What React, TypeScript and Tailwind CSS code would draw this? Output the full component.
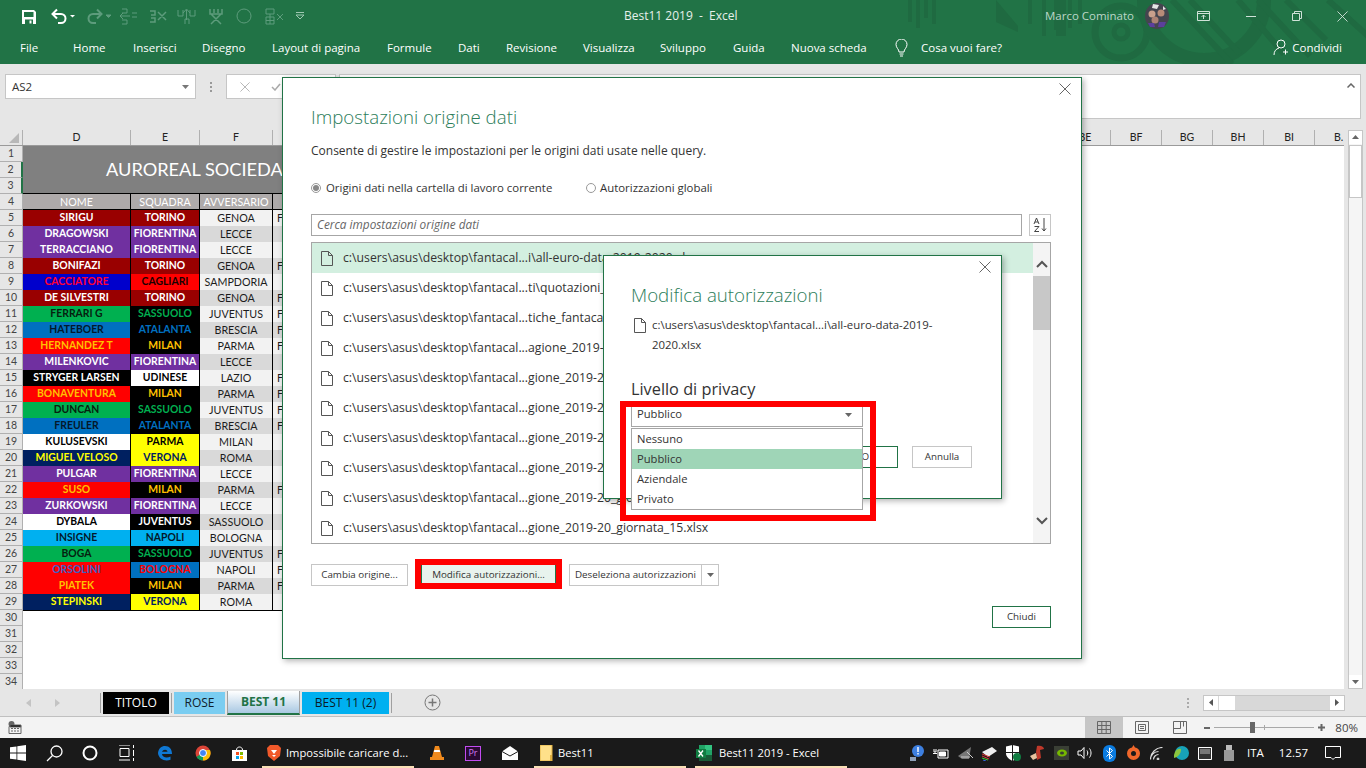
import type { ReactNode } from 'react'

const UI = "font-['Open_Sans','Noto_Sans',sans-serif]"

// nome, fondo, testo, squadra, fondo, testo, avversario, colonna G
const ROWS: [string, string, string, string, string, string, string, boolean][] = [
  ['SIRIGU', 'bg-[#990000]', 'text-white', 'TORINO', 'bg-[#990000]', 'text-white', 'GENOA', true],
  ['DRAGOWSKI', 'bg-[#7030a0]', 'text-white', 'FIORENTINA', 'bg-[#7030a0]', 'text-white', 'LECCE', false],
  ['TERRACCIANO', 'bg-[#7030a0]', 'text-white', 'FIORENTINA', 'bg-[#7030a0]', 'text-white', 'LECCE', false],
  ['BONIFAZI', 'bg-[#990000]', 'text-white', 'TORINO', 'bg-[#990000]', 'text-white', 'GENOA', true],
  ['CACCIATORE', 'bg-[#0000cc]', 'text-[#ff0033]', 'CAGLIARI', 'bg-[#ff0000]', 'text-[#1a0000]', 'SAMPDORIA', false],
  ['DE SILVESTRI', 'bg-[#990000]', 'text-white', 'TORINO', 'bg-[#990000]', 'text-white', 'GENOA', true],
  ['FERRARI G', 'bg-[#00b050]', 'text-[#06210f]', 'SASSUOLO', 'bg-black', 'text-[#00b050]', 'JUVENTUS', true],
  ['HATEBOER', 'bg-[#0070c0]', 'text-[#04182a]', 'ATALANTA', 'bg-black', 'text-[#0070c0]', 'BRESCIA', true],
  ['HERNANDEZ T', 'bg-[#ff0000]', 'text-[#ffc000]', 'MILAN', 'bg-black', 'text-[#ffc000]', 'PARMA', true],
  ['MILENKOVIC', 'bg-[#7030a0]', 'text-white', 'FIORENTINA', 'bg-[#7030a0]', 'text-white', 'LECCE', false],
  ['STRYGER LARSEN', 'bg-black', 'text-white', 'UDINESE', 'bg-white', 'text-black', 'LAZIO', true],
  ['BONAVENTURA', 'bg-[#ff0000]', 'text-[#ffc000]', 'MILAN', 'bg-black', 'text-[#ffc000]', 'PARMA', true],
  ['DUNCAN', 'bg-[#00b050]', 'text-[#06210f]', 'SASSUOLO', 'bg-black', 'text-[#00b050]', 'JUVENTUS', true],
  ['FREULER', 'bg-[#0070c0]', 'text-[#04182a]', 'ATALANTA', 'bg-black', 'text-[#0070c0]', 'BRESCIA', true],
  ['KULUSEVSKI', 'bg-white', 'text-black', 'PARMA', 'bg-[#ffff00]', 'text-black', 'MILAN', false],
  ['MIGUEL VELOSO', 'bg-[#002060]', 'text-[#ffff00]', 'VERONA', 'bg-[#ffff00]', 'text-[#002060]', 'ROMA', false],
  ['PULGAR', 'bg-[#7030a0]', 'text-white', 'FIORENTINA', 'bg-[#7030a0]', 'text-white', 'LECCE', false],
  ['SUSO', 'bg-[#ff0000]', 'text-[#ffc000]', 'MILAN', 'bg-black', 'text-[#ffc000]', 'PARMA', true],
  ['ZURKOWSKI', 'bg-[#7030a0]', 'text-white', 'FIORENTINA', 'bg-[#7030a0]', 'text-white', 'LECCE', false],
  ['DYBALA', 'bg-white', 'text-black', 'JUVENTUS', 'bg-black', 'text-white', 'SASSUOLO', false],
  ['INSIGNE', 'bg-[#00b0f0]', 'text-[#04182a]', 'NAPOLI', 'bg-[#00b0f0]', 'text-[#04182a]', 'BOLOGNA', false],
  ['BOGA', 'bg-[#00b050]', 'text-[#06210f]', 'SASSUOLO', 'bg-black', 'text-[#00b050]', 'JUVENTUS', true],
  ['ORSOLINI', 'bg-[#ff0000]', 'text-[#3f5fc0]', 'BOLOGNA', 'bg-[#0070c0]', 'text-[#ff0000]', 'NAPOLI', true],
  ['PIATEK', 'bg-[#ff0000]', 'text-[#ffc000]', 'MILAN', 'bg-black', 'text-[#ffc000]', 'PARMA', true],
  ['STEPINSKI', 'bg-[#002060]', 'text-[#ffff00]', 'VERONA', 'bg-[#ffff00]', 'text-[#002060]', 'ROMA', false],
]

const TABS: [string, string][] = [
  ['File', 'w-[73px] pl-[20px]'],
  ['Home', 'w-[60px]'],
  ['Inserisci', 'w-[69px]'],
  ['Disegno', 'w-[70px]'],
  ['Layout di pagina', 'w-[115px]'],
  ['Formule', 'w-[71px]'],
  ['Dati', 'w-[48px]'],
  ['Revisione', 'w-[77px]'],
  ['Visualizza', 'w-[77px]'],
  ['Sviluppo', 'w-[73px]'],
  ['Guida', 'w-[58px]'],
  ['Nuova scheda', 'w-[70px]'],
]

const FILES = [
  'i\\all-euro-data-2019-2020.xlsx',
  'ti\\quotazioni_',
  'tiche_fantacal',
  'agione_2019-',
  'gione_2019-2',
  'gione_2019-2',
  'gione_2019-2',
  'gione_2019-2',
  'gione_2019-20_gio',
  'gione_2019-20_giornata_15.xlsx',
]

function FileIcon() {
  return (
    <svg width="12" height="15" viewBox="0 0 12 15" fill="none" stroke="#555" className="shrink-0">
      <path d="M.5.5h7l4 4v10H.5zM7.5.5v4h4" />
    </svg>
  )
}

function Close({ size = 12, color = '#666' }: { size?: number; color?: string }) {
  return (
    <svg width={size} height={size} viewBox="0 0 12 12" stroke={color} fill="none">
      <path d="M.5.5l11 11M11.5.5l-11 11" />
    </svg>
  )
}

function Caret({ color = '#666' }: { color?: string }) {
  return (
    <svg width="7" height="4" viewBox="0 0 7 4" fill={color}>
      <path d="M0 0h7L3.5 4z" />
    </svg>
  )
}

function QatIcons() {
  return (
    <svg width="300" height="32" viewBox="0 0 300 32" fill="none" className="shrink-0">
      {/* salva */}
      <path d="M22 10h12l2 2v12H22z" fill="#fff" />
      <path d="M24 12h9.500v5H24zM25 19.500h8V24h-8z" fill="#217346" />
      <path d="M29.500 20.500h2v3h-2z" fill="#fff" />
      {/* annulla */}
      <path d="M53 14h8a4.500 4.500 0 0 1 0 9h-3M57 9.500L52.500 14l4.500 4.500" stroke="#fff" strokeWidth="2" />
      <path d="M70 15h5l-2.500 2.500z" fill="#fff" />
      {/* ripeti e comandi disattivati */}
      <g stroke="#5d9c7c">
        <path d="M101 14h-8a4.500 4.500 0 0 0 0 9h3M97 9.500l4.500 4.500-4.500 4.500" strokeWidth="2" />
        <path d="M106 15h5l-2.500 2.500z" fill="#5d9c7c" />
        <path d="M122 9h5v4h-5M122 20h5v4h-5M120 16h10M123 13l-3 3 3 3M132 13h5M132 17h5" />
        <path d="M150 11h5v4h-4M150 22h5v-4h-4M158 12l8 8M166 12l-8 8" strokeWidth="1.500" />
        <path d="M178 10v6h5v-6M190 10v6h5v-6M186.500 20v-10M183 13l3.500-4 3.500 4M185 24v-5h4v5" />
        <path d="M210 9v5h12V9M214 9v4M218 9v4M211 24l10-10M211 14l10 10" strokeWidth="1.500" />
        <circle cx="244" cy="16" r="7" />
        <path d="M266 9h8v5h-8zM266 17h8v7h-8zM266 20.500h8M270 14v10M277 14l6 6M283 14l-6 6" />
      </g>
    </svg>
  )
}

function TitleBackdrop() {
  return (
    <svg width="500" height="64" viewBox="0 0 500 64" fill="none" stroke="#1f6a41" className="absolute right-0 top-0">
      <g strokeWidth="4">
        <path d="M44 0v22M52 0v28M60 0v18M68 0v24" />
        <path d="M164 0v24M178 0v36M190 0v30M196 0v34M204 0v28M214 0v24" />
      </g>
      <path d="M130 0l22 26v6l-22-10z" fill="#1f6a41" stroke="none" />
      <path d="M190 0h10v36h-10z" fill="#1f6a41" stroke="none" />
      <circle cx="255" cy="32" r="26" strokeWidth="7" />
      <circle cx="255" cy="32" r="7" strokeWidth="5" />
      <circle cx="290" cy="-8" r="11" fill="#1f6a41" stroke="none" />
      <circle cx="338" cy="0" r="60" strokeWidth="14" />
      <g strokeWidth="6">
        <path d="M306 0l60 64M324 0l50 54M372 0l46 54M392 0l52 56M420 0l40 40M462 0l40 36" />
      </g>
    </svg>
  )
}

function Avatar() {
  return (
    <svg width="24" height="26" viewBox="0 0 24 26" className="shrink-0">
      <ellipse cx="12" cy="13" rx="12" ry="13" fill="#44454f" />
      <circle cx="7" cy="11" r="3.500" fill="#c9a08c" />
      <circle cx="16" cy="10" r="3.500" fill="#b98b78" />
      <circle cx="10" cy="17" r="3.500" fill="#ad8274" />
      <path d="M14 19h7l-2 5h-6zM3 20h6l1 4H5z" fill="#5b3f9c" />
      <path d="M8 1l6 1-2 4-5-1zM18 3l3 3-3 1z" fill="#e4e4e4" />
    </svg>
  )
}

function TitleBar() {
  return (
    <div className={`relative flex h-[32px] items-center ${UI}`}>
      <QatIcons />
      <svg width="12" height="8" viewBox="0 0 12 8" fill="none" stroke="#9fc8b2" className="-ml-[5px] shrink-0">
        <path d="M1 .5h8M1 3h8l-4 4z" />
      </svg>
      <span className="absolute left-[624px] top-[7px] text-[12px] leading-[18px] text-[#e6f0ea]">Best11 2019&nbsp; -&nbsp; Excel</span>
      <div className="relative ml-auto flex items-center">
        <span className="mr-[11px] text-[11.5px] text-[#bcd6c8]">Marco Cominato</span>
        <Avatar />
        <svg width="13" height="10" viewBox="0 0 13 10" fill="none" stroke="#cfe2d8" className="ml-[28px]">
          <path d="M.5.5h12v9H.5zM.5 2.500h12M6.500 8V4M4.500 6l2-2 2 2" />
        </svg>
        <span className="ml-[36px] h-px w-[10px] bg-[#cfe2d8]" />
        <svg width="10" height="10" viewBox="0 0 10 10" fill="none" stroke="#cfe2d8" className="ml-[36px]">
          <path d="M.5 2.500h7v7h-7zM2.500 2.500v-2h7v7h-2" />
        </svg>
        <span className="ml-[35px] mr-[18px]"><Close size={11} color="#cfe2d8" /></span>
      </div>
    </div>
  )
}

function RibbonTabs() {
  return (
    <div className={`relative flex h-[32px] items-center pb-[1px] text-[11.5px] text-white ${UI}`}>
      {TABS.map(([t, w]) => (
        <span key={t} className={`shrink-0 whitespace-nowrap ${w}`}>{t}</span>
      ))}
      <svg width="13" height="18" viewBox="0 0 13 18" fill="none" stroke="#fff" className="ml-[34px] mr-[13px] shrink-0">
        <path d="M4 13c0-3-3-4-3-7.500a5.500 5.500 0 0 1 11 0C12 9 9 10 9 13zM4.500 15h4M5 17h3" />
      </svg>
      <span className="whitespace-nowrap">Cosa vuoi fare?</span>
      <div className="ml-auto mr-[24px] flex items-center gap-[3px]">
        <svg width="16" height="17" viewBox="0 0 16 17" fill="none" stroke="#fff">
          <circle cx="8" cy="5" r="4" />
          <path d="M1 16c0-4 2-6 5-7M10 13h5M12.500 10.500v5" />
        </svg>
        <span>Condividi</span>
      </div>
    </div>
  )
}

function FormulaBar() {
  return (
    <div className={`flex h-[66px] bg-[#e6e6e6] pl-[5px] pr-[5px] pt-[10px] ${UI}`}>
      <div className="flex h-[25px] w-[191px] items-center justify-between border border-[#c6c6c6] bg-white pl-[6px] pr-[6px] text-[11.5px] text-[#333]">
        AS2
        <Caret color="#777" />
      </div>
      <div className="flex h-[25px] w-[30px] flex-col items-center justify-center gap-[2px]">
        <span className="h-[2px] w-[2px] bg-[#999]" />
        <span className="h-[2px] w-[2px] bg-[#999]" />
        <span className="h-[2px] w-[2px] bg-[#999]" />
      </div>
      <div className="flex h-[25px] w-[110px] items-center gap-[21px] border border-[#c6c6c6] bg-white pl-[13px]">
        <Close size={10} color="#aaa" />
        <svg width="10" height="8" viewBox="0 0 10 8" fill="none" stroke="#aaa" strokeWidth="1.500"><path d="M1 4l3 3 5-6" /></svg>
      </div>
      <div className="relative ml-[3px] h-[45px] flex-1 border border-[#c6c6c6] bg-white">
        <svg width="8" height="5" viewBox="0 0 8 5" fill="none" stroke="#666" strokeWidth="1.500" className="absolute right-[5px] top-[8px]">
          <path d="M.5 4.500L4 1l3.500 3.500" />
        </svg>
      </div>
    </div>
  )
}

function Cell({ className, children }: { className: string; children: ReactNode }) {
  return <div className={`flex h-full items-center justify-center whitespace-nowrap border-b border-r border-black ${className}`}>{children}</div>
}

function RowHead({ n }: { n: number }) {
  return (
    <div className={`flex h-[16px] w-[23px] shrink-0 items-center justify-center border-b border-r border-[#b0b0b0] bg-[#e6e6e6] text-[10.5px] text-[#444] ${n === 2 || n === 3 ? 'border-r-2 border-r-[#217346]' : ''}`}>
      {n}
    </div>
  )
}

function ColHead({ w, children }: { w: string; children?: ReactNode }) {
  return <div className={`flex h-full shrink-0 items-center justify-center border-r border-[#b0b0b0] ${w}`}>{children}</div>
}

function Sheet() {
  return (
    <div className="flex h-[560px] overflow-hidden bg-[#e6e6e6] font-['Lato',sans-serif]">
      <div className="w-[1344px] shrink-0">
        <div className="flex h-[16px] items-center border-b border-[#9a9a9a] text-[10.5px] text-[#222]">
          <div className="relative h-full w-[23px] shrink-0 border-r border-[#b0b0b0]">
            <svg width="10" height="10" viewBox="0 0 10 10" className="absolute bottom-[2px] right-[3px]" fill="#b8b8b8"><path d="M10 0v10H0z" /></svg>
          </div>
          <ColHead w="w-[108px]">D</ColHead>
          <ColHead w="w-[69px]">E</ColHead>
          <ColHead w="w-[73px]">F</ColHead>
          <ColHead w="w-[787px]" />
          <ColHead w="w-[51px]">BE</ColHead>
          <ColHead w="w-[51px]">BF</ColHead>
          <ColHead w="w-[51px]">BG</ColHead>
          <ColHead w="w-[51px]">BH</ColHead>
          <ColHead w="w-[51px]">BI</ColHead>
          <div className="flex-1 pl-[19px]">B.</div>
        </div>
        <div className="h-[544px] border-b border-[#9a9a9a] bg-white">
          <div className="flex h-[48px]">
            <div>
              <RowHead n={1} />
              <RowHead n={2} />
              <RowHead n={3} />
            </div>
            <div className="flex w-[300px] items-center overflow-hidden whitespace-nowrap border-b border-black bg-[#808080] pl-[83px] text-[18.2px] text-white">AUROREAL SOCIEDAD</div>
          </div>
          <div className="flex h-[16px]">
            <RowHead n={4} />
            <div className="grid w-[320px] grid-cols-[108px_69px_73px_70px] border-b border-black bg-[#aeaaaa] text-[10.7px] text-white">
              <div className="flex items-center justify-center border-r border-black">NOME</div>
              <div className="flex items-center justify-center border-r border-black">SQUADRA</div>
              <div className="flex items-center justify-center border-r border-black">AVVERSARIO</div>
              <div />
            </div>
          </div>
          {ROWS.map((r, i) => {
            const n = i + 5
            const alt = n % 2 === 1 ? 'bg-[#f2f2f2]' : 'bg-[#d9d9d9]'
            return (
              <div key={n} className="flex h-[16px]">
                <RowHead n={n} />
                <div className="grid w-[320px] grid-cols-[108px_69px_73px_70px] text-[10.7px]">
                  <Cell className={`text-[10.4px] font-bold ${r[1]} ${r[2]}`}>{r[0]}</Cell>
                  <Cell className={`text-[10.4px] font-bold ${r[4]} ${r[5]}`}>{r[3]}</Cell>
                  <Cell className={`text-[#1c1c1c] ${alt}`}>{r[6]}</Cell>
                  <Cell className={`justify-start pl-[4px] text-[#1c1c1c] ${alt}`}>{r[7] ? 'F' : ''}</Cell>
                </div>
              </div>
            )
          })}
          {[30, 31, 32, 33, 34].map((n) => <RowHead key={n} n={n} />)}
        </div>
      </div>
      <div className="ml-[4px] flex w-[15px] shrink-0 flex-col border border-[#c6c6c6] bg-[#f5f5f5]">
        <div className="flex h-[13px] items-center justify-center bg-white">
          <svg width="7" height="4" viewBox="0 0 7 4" fill="#666"><path d="M0 4h7L3.500 0z" /></svg>
        </div>
        <div className="mt-[1px] h-[53px] border border-[#c6c6c6] bg-white" />
        <div className="mt-auto flex h-[13px] items-center justify-center bg-white">
          <Caret />
        </div>
      </div>
    </div>
  )
}

function SheetTab({ className, children }: { className: string; children: ReactNode }) {
  return <div className={`flex h-[22px] shrink-0 items-center justify-center text-[12px] ${className}`}>{children}</div>
}

function SheetTabs() {
  const sep = <span className="mx-[2px] h-[20px] w-px shrink-0 bg-[#a0a0a0]" />
  return (
    <div className={`flex h-[28px] items-center border-b border-[#c0c0c0] bg-[#e6e6e6] ${UI}`}>
      <svg width="40" height="8" viewBox="0 0 40 8" fill="#c4c4c4" className="ml-[26px] mr-[32px] shrink-0">
        <path d="M5 0v8L0 4zM29 0v8l5-4z" />
      </svg>
      {sep}
      <SheetTab className="w-[66px] bg-black text-white">TITOLO</SheetTab>
      {sep}
      <SheetTab className="w-[51px] bg-[#7acdf1] text-[#10202a]">ROSE</SheetTab>
      <div className="ml-[2px] flex h-[24px] w-[73px] shrink-0 items-center justify-center border-b-2 border-l border-r border-[#217346] border-l-[#a0a0a0] border-r-[#a0a0a0] bg-gradient-to-b from-white to-[#a9c8e2] text-[12px] font-bold text-[#217346]">BEST 11</div>
      <SheetTab className="ml-[2px] w-[87px] bg-[#00b0f0] text-[#0a1a26]">BEST 11 (2)</SheetTab>
      {sep}
      <svg width="17" height="17" viewBox="0 0 17 17" fill="none" stroke="#777" className="ml-[30px] shrink-0">
        <circle cx="8.500" cy="8.500" r="7.500" />
        <path d="M8.500 4.500v8M4.500 8.500h8" strokeWidth="1.500" />
      </svg>
      <div className="ml-auto mr-[21px] flex items-center">
        <div className="mr-[14px] flex flex-col gap-[2px]">
          <span className="h-[2px] w-[2px] bg-[#aaa]" />
          <span className="h-[2px] w-[2px] bg-[#aaa]" />
          <span className="h-[2px] w-[2px] bg-[#aaa]" />
        </div>
        <div className="flex h-[16px] w-[142px] items-center border border-[#c6c6c6] bg-[#d8d8d8]">
          <div className="flex h-full w-[14px] items-center justify-center bg-white">
            <svg width="4" height="7" viewBox="0 0 4 7" fill="#555"><path d="M4 0v7L0 3.500z" /></svg>
          </div>
          <div className="ml-[1px] h-full w-[16px] bg-white" />
          <div className="ml-auto flex h-full w-[14px] items-center justify-center bg-white">
            <svg width="4" height="7" viewBox="0 0 4 7" fill="#555"><path d="M0 0v7l4-3.500z" /></svg>
          </div>
        </div>
      </div>
    </div>
  )
}

function StatusBar() {
  return (
    <div className={`flex h-[21px] items-center bg-[#f3f3f3] ${UI}`}>
      <svg width="14" height="13" viewBox="0 0 14 13" className="ml-[8px] shrink-0">
        <circle cx="3.500" cy="3" r="3" fill="#666" />
        <path d="M1 5.500h12v7H1z" fill="none" stroke="#666" />
        <path d="M2 4h11v2H2zM3 7.500h2M6 7.500h2M9 7.500h2M3 10h2M6 10h2M9 10h2" stroke="#666" />
      </svg>
      <div className="ml-auto flex h-full items-center">
        <div className="flex h-full w-[38px] items-center justify-center bg-[#c6c6c6]">
          <svg width="14" height="13" viewBox="0 0 14 13" fill="none" stroke="#666"><path d="M.5.500h13v12H.5zM.5 4.500h13M.5 8.500h13M4.800.5v12M9.200.5v12" /></svg>
        </div>
        <svg width="14" height="13" viewBox="0 0 14 13" fill="none" stroke="#666" className="ml-[12px]"><path d="M.5.500h13v12H.5zM3.500 3.500h7v6h-7zM5 5.500h4M5 7.500h4" /></svg>
        <svg width="14" height="13" viewBox="0 0 14 13" fill="none" stroke="#666" className="ml-[24px]"><path d="M.5.500h13v12H.5zM.5 7.500h7v-7M10.500.5v5" /></svg>
        <span className="ml-[17px] h-[2px] w-[6px] bg-[#666]" />
        <div className="relative mx-[4px] h-px w-[100px] bg-[#a8a8a8]">
          <span className="absolute left-[36px] top-[-5px] h-[11px] w-[5px] bg-[#666]" />
          <span className="absolute left-[50px] top-[-2px] h-[5px] w-px bg-[#a8a8a8]" />
        </div>
        <svg width="7" height="7" viewBox="0 0 7 7" stroke="#666" strokeWidth="2"><path d="M0 3.500h7M3.500 0v7" /></svg>
        <span className="ml-[10px] mr-[8px] text-[11.5px] text-[#444]">80%</span>
      </div>
    </div>
  )
}

function TrayIcon({ x, children }: { x: string; children: ReactNode }) {
  return <span className={`flex shrink-0 items-center justify-center ${x}`}>{children}</span>
}

function Taskbar() {
  return (
    <div className={`flex h-[30px] items-center bg-[#1a1a1a] text-[11.2px] text-white ${UI}`}>
      <TrayIcon x="w-[36px]">
        <svg width="16" height="16" viewBox="0 0 16 16" fill="#fff"><path d="M0 2.300l6.500-.9v6.200H0zM7.300 1.300L16 0v7.600H7.300zM0 8.400h6.500v6.200L0 13.700zM7.300 8.400H16V16l-8.700-1.300z" /></svg>
      </TrayIcon>
      <TrayIcon x="w-[36px]">
        <svg width="17" height="17" viewBox="0 0 17 17" fill="none" stroke="#fff" strokeWidth="1.300"><circle cx="10.500" cy="6.500" r="5.500" /><path d="M6.500 10.500L1 16" /></svg>
      </TrayIcon>
      <TrayIcon x="w-[36px]">
        <svg width="16" height="16" viewBox="0 0 16 16" fill="none" stroke="#fff" strokeWidth="2"><circle cx="8" cy="8" r="6.500" /></svg>
      </TrayIcon>
      <TrayIcon x="w-[36px]">
        <svg width="17" height="16" viewBox="0 0 17 16" fill="none" stroke="#fff"><path d="M1 0h11M2 3.500h9v8H2zM1 15h11M15.500 0v3M15.500 5v6M15.500 13v3" /></svg>
      </TrayIcon>
      <TrayIcon x="ml-[3px] w-[36px]">
        <svg width="16" height="16" viewBox="0 0 16 16"><path d="M1 8c.5-4.500 3.500-7 7-7 4.500 0 7 3 7 8H5c.2 3.500 5 4.500 8.500 2.500v3.200C8 17 1.500 14 1 8z" fill="#0f78d4" /><path d="M5 6.700h5.500C10.300 4 6 4 5 6.700z" fill="#1a1a1a" /></svg>
      </TrayIcon>
      <TrayIcon x="ml-[1px] w-[37px]">
        <svg width="16" height="16" viewBox="0 0 16 16"><circle cx="8" cy="8" r="7.500" fill="#db4437" /><path d="M8 8L1.500 11.700A7.500 7.500 0 0 0 8 15.500z" fill="#0f9d58" /><path d="M8 8v7.500A7.500 7.500 0 0 0 15 5H8z" fill="#fbbc05" /><circle cx="8" cy="8" r="3.500" fill="#4285f4" stroke="#fff" /></svg>
      </TrayIcon>
      <TrayIcon x="w-[36px]">
        <svg width="15" height="15" viewBox="0 0 15 15"><path d="M0 4h15v11H0z" fill="#fff" /><path d="M4.500 4c0-4 6-4 6 0" fill="none" stroke="#fff" /><path d="M4 6h3v3H4z" fill="#f25022" /><path d="M8 6h3v3H8z" fill="#7fba00" /><path d="M4 10h3v3H4z" fill="#00a4ef" /><path d="M8 10h3v3H8z" fill="#ffb900" /></svg>
      </TrayIcon>
      <div className="relative ml-[5px] flex h-full w-[152px] shrink-0 items-center">
        <svg width="14" height="16" viewBox="0 0 14 16" className="ml-[5px] mr-[5px] shrink-0"><path d="M3 0h8l3 3-1 8-6 5-6-5-1-8z" fill="#f1592a" /><path d="M4 5h6L7 9zM5 10h4l-2 2z" fill="#fff" /></svg>
        <span className="whitespace-nowrap">Impossibile caricare d...</span>
        <span className="absolute bottom-0 left-0 h-[2px] w-full bg-[#f8dfb5]" />
      </div>
      <TrayIcon x="ml-[7px] w-[32px]">
        <svg width="14" height="16" viewBox="0 0 14 16"><path d="M5 1h4l3 11H2z" fill="#f08a1d" /><path d="M4.300 5h5.400l.5 2H3.800z" fill="#fff" /><path d="M0 12h14v3H0z" fill="#f08a1d" /></svg>
      </TrayIcon>
      <TrayIcon x="ml-[2px] w-[36px]">
        <span className="flex h-[15px] w-[16px] items-center justify-center border border-[#c24cf0] bg-[#2a0a33] text-[9px] text-[#d47cf5]">Pr</span>
      </TrayIcon>
      <TrayIcon x="w-[38px]">
        <svg width="16" height="14" viewBox="0 0 16 14"><path d="M0 5.500L8 0l8 5.500V14H0z" fill="#fff" /><path d="M0 5.500L8 10l8-4.500" fill="none" stroke="#1a1a1a" /></svg>
      </TrayIcon>
      <div className="relative ml-[5px] flex h-full w-[152px] shrink-0 items-center">
        <svg width="13" height="16" viewBox="0 0 13 16" className="ml-[6px] mr-[5px] shrink-0"><path d="M0 0h12v16H0z" fill="#ffe08a" stroke="#e0b040" /><path d="M10 10h2v6h-2z" fill="#e0b040" /></svg>
        <span>Best11</span>
        <span className="absolute bottom-0 left-0 h-[2px] w-full bg-[#f8dfb5]" />
      </div>
      <div className="relative ml-[9px] flex h-full w-[152px] shrink-0 items-center">
        <svg width="16" height="16" viewBox="0 0 16 16" className="ml-[1px] mr-[7px] shrink-0"><path d="M3 0h13v16H3z" fill="#21a366" /><path d="M9 0h7v5H9z" fill="#33c481" /><path d="M3 10h13v6H3z" fill="#185c37" /><path d="M0 4h10v9H0z" fill="#107c41" /><path d="M2.500 5.500l4.500 6M7 5.500l-4.500 6" stroke="#fff" strokeWidth="1.300" /></svg>
        <span className="whitespace-nowrap">Best11 2019 - Excel</span>
        <span className="absolute bottom-0 left-0 h-[2px] w-full bg-[#f8dfb5]" />
      </div>
      <div className="ml-[58px] flex items-center">
        <TrayIcon x="w-[24px]">
          <svg width="14" height="16" viewBox="0 0 14 16"><circle cx="8" cy="6" r="6" fill="#3d7fe0" /><path d="M7.300 2h1.400v5H7.300zM7.300 8h1.400v1.500H7.300z" fill="#fff" /><path d="M0 12h6v4H0z" fill="#8fa0b8" /></svg>
        </TrayIcon>
        <TrayIcon x="w-[24px]">
          <svg width="16" height="11" viewBox="0 0 16 11" fill="none" stroke="#fff"><path d="M5 2h10v8H5z" /><path d="M6.500 4h6v4h-6z" fill="#fff" /><path d="M0 5.500h4M1 1v3h2V1" /></svg>
        </TrayIcon>
        <TrayIcon x="w-[24px]">
          <svg width="15" height="14" viewBox="0 0 15 14"><path d="M0 10l13-9-2 12H4z" fill="#777" /><path d="M9 6l6 6M3 11h9" stroke="#ccc" /></svg>
        </TrayIcon>
        <TrayIcon x="w-[24px]">
          <svg width="16" height="15" viewBox="0 0 16 15"><path d="M1 6l10-5 5 4-9 6z" fill="#eee" /><path d="M1 8l8 3M1 10l7 3" stroke="#d33" /><path d="M1 12l6 2" stroke="#3c3" /><path d="M2 14l3 1" stroke="#36d" /></svg>
        </TrayIcon>
        <TrayIcon x="w-[24px]">
          <svg width="16" height="16" viewBox="0 0 16 16"><path d="M1 1.500L7.500 0 14 1.500V8c0 4-3 6-6.500 8C4 14 1 12 1 8z" fill="#fff" /><path d="M7 0h1v16H7zM1 7h13v1H1z" fill="#1a1a1a" /><circle cx="12" cy="12" r="4" fill="#107c41" /></svg>
        </TrayIcon>
        <TrayIcon x="w-[24px]">
          <svg width="16" height="16" viewBox="0 0 16 16"><path d="M8 1c4-1 7 1 7 3l-4 1 1 8-4 2-1-8z" fill="#c0392b" /><path d="M1 11l6-3 1 5-4 2z" fill="#e8c4a0" /></svg>
        </TrayIcon>
        <TrayIcon x="w-[24px]">
          <svg width="15" height="14" viewBox="0 0 15 14"><path d="M0 0h15v14H0z" fill="#3a3f35" /><ellipse cx="8" cy="7" rx="5" ry="3.500" fill="#76b900" /><ellipse cx="8" cy="7" rx="2" ry="1.500" fill="#3a3f35" /></svg>
        </TrayIcon>
        <TrayIcon x="w-[24px]">
          <svg width="16" height="14" viewBox="0 0 16 14" fill="none" stroke="#fff"><path d="M1 5v4h3l3 3.500v-11L4 5zM10 4.500c1 1.500 1 3.500 0 5M12.500 2.500c2 2.500 2 6.500 0 9" /></svg>
        </TrayIcon>
        <TrayIcon x="w-[24px]">
          <svg width="13" height="17" viewBox="0 0 13 17"><rect width="13" height="17" rx="6" fill="#0a7be0" /><path d="M3.500 5.500l6 6-3 2.500V3l3 2.500-6 6" fill="none" stroke="#fff" /></svg>
        </TrayIcon>
        <TrayIcon x="w-[24px]">
          <svg width="13" height="16" viewBox="0 0 13 16"><path d="M6.500 0l1.500 2.500c3 .5 5 3 5 6a6.500 6.500 0 0 1-13 0c0-3 2-5.500 5-6z" fill="#f0672b" /><circle cx="6.500" cy="8.500" r="2.500" fill="#1a1a1a" /></svg>
        </TrayIcon>
        <TrayIcon x="w-[24px]">
          <svg width="14" height="13" viewBox="0 0 14 13" fill="none" stroke="#ddd"><path d="M.5 12.500a12 12 0 0 1 12-12M.5 12.500a8 8 0 0 1 8-8M3.500 12.500a5 5 0 0 1 5-5" strokeWidth="1.200" /><circle cx="8" cy="12" r="1" fill="#ddd" /></svg>
        </TrayIcon>
        <TrayIcon x="w-[24px]">
          <svg width="16" height="16" viewBox="0 0 16 16"><circle cx="9" cy="8" r="7" fill="#17a2b8" /><path d="M1 10c1-5 4-7 7-6 0 5-3 8-7 9z" fill="#8cc63f" /></svg>
        </TrayIcon>
        <TrayIcon x="w-[24px]">
          <svg width="14" height="13" viewBox="0 0 14 13"><path d="M.5.500h13v12H.5z" fill="#333" stroke="#fff" /><path d="M2 2h10v5H2z" fill="#777" /></svg>
        </TrayIcon>
        <TrayIcon x="w-[24px]">
          <svg width="12" height="16" viewBox="0 0 12 16"><path d="M3 0h6v5H3z" fill="#bbb" /><path d="M1 5h10v11H1z" fill="#999" /></svg>
        </TrayIcon>
      </div>
      <span className="ml-[6px] text-[11.5px]">ITA</span>
      <span className="ml-[15px] text-[11.5px]">12.57</span>
      <svg width="16" height="15" viewBox="0 0 16 15" fill="none" stroke="#fff" className="ml-[17px]"><path d="M.5.500h15v11H10l-2 2-2-2H.5z" /></svg>
    </div>
  )
}

function Btn({ className, children }: { className: string; children: ReactNode }) {
  return <div className={`flex h-[22px] shrink-0 items-center justify-center text-[9.8px] text-[#333] ${className}`}>{children}</div>
}

function DataSourceDialog() {
  return (
    <div className={`absolute left-[282px] top-[77px] flex h-[582px] w-[800px] flex-col border border-[#217346] bg-white pl-[28px] pr-[30px] text-[#333] shadow-[2px_2px_6px_rgba(0,0,0,0.3)] ${UI}`}>
      <div className="absolute right-[10px] top-[5px]"><Close /></div>
      <h1 className="mt-[25px] h-[27px] text-[18.7px] font-light leading-[27px] text-[#2c7d5a]">Impostazioni origine dati</h1>
      <p className="mt-[12px] h-[18px] text-[12px] leading-[18px]">Consente di gestire le impostazioni per le origini dati usate nelle query.</p>
      <div className="mt-[19px] flex h-[18px] items-center text-[11.4px]">
        <span className="flex h-[10px] w-[10px] items-center justify-center rounded-full border border-[#999]">
          <span className="h-[6px] w-[6px] rounded-full bg-[#888]" />
        </span>
        <span className="ml-[5px] w-[260px]">Origini dati nella cartella di lavoro corrente</span>
        <span className="h-[10px] w-[10px] rounded-full border border-[#999]" />
        <span className="ml-[4px]">Autorizzazioni globali</span>
      </div>
      <div className="mt-[17px] flex h-[22px] gap-[7px]">
        <div className="flex w-[711px] items-center border border-[#a6a6a6] pl-[5px] text-[11.8px] italic text-[#666]">Cerca impostazioni origine dati</div>
        <div className="flex w-[22px] items-center justify-center border border-[#c6c6c6]">
          <svg width="14" height="16" viewBox="0 0 14 16" fill="none" stroke="#444"><path d="M11 1v13M9 11.500l2 2.500 2-2.500" /><path d="M1 7l2.500-6L6 7M2 5h3M1.500 9.500H6L1.500 14.500H6" /></svg>
        </div>
      </div>
      <div className="mt-[6px] flex h-[302px] w-[740px] shrink-0 border border-[#a6a6a6]">
        <div className="w-[721px]">
          {FILES.map((f, i) => (
            <div key={i} className={`flex h-[30px] items-center whitespace-nowrap pl-[9px] pt-[1px] text-[12.25px] ${i === 0 ? 'bg-[#d3efe0]' : ''}`}>
              <FileIcon />
              <span className="ml-[10px]">c:\users\asus\desktop\fantacal...{f}</span>
            </div>
          ))}
        </div>
        <div className="flex w-[17px] flex-col items-center bg-[#f4f4f4]">
          <svg width="12" height="8" viewBox="0 0 12 8" fill="none" stroke="#555" strokeWidth="2" className="mt-[17px]"><path d="M1 7l5-5 5 5" /></svg>
          <div className="mt-[8px] h-[54px] w-full bg-[#c8c8c8]" />
          <svg width="12" height="8" viewBox="0 0 12 8" fill="none" stroke="#555" strokeWidth="2" className="mb-[18px] mt-auto"><path d="M1 1l5 5 5-5" /></svg>
        </div>
      </div>
      <div className="mt-[20px] flex">
        <Btn className="w-[97px] border border-[#c6c6c6]">Cambia origine...</Btn>
        <Btn className="ml-[13px] w-[135px] border-x border-[#217346] bg-[#e8f3ed]">Modifica autorizzazioni...</Btn>
        <Btn className="ml-[13px] w-[150px] border border-[#c6c6c6]">
          <span className="flex h-full w-[132px] items-center justify-center whitespace-nowrap border-r border-[#c6c6c6]">Deseleziona autorizzazioni</span>
          <span className="flex flex-1 justify-center"><Caret /></span>
        </Btn>
      </div>
      <div className="mt-[20px] flex justify-end">
        <Btn className="w-[59px] border border-[#217346]">Chiudi</Btn>
      </div>
    </div>
  )
}

function PermissionDialog() {
  return (
    <div className={`absolute left-[603px] top-[255px] h-[244px] w-[399px] border border-[#217346] bg-white pl-[27px] text-[#333] shadow-[2px_2px_6px_rgba(0,0,0,0.3)] ${UI}`}>
      <div className="absolute right-[10px] top-[5px]"><Close /></div>
      <h2 className="mt-[25px] h-[27px] text-[18.7px] font-light leading-[27px] text-[#2c7d5a]">Modifica autorizzazioni</h2>
      <div className="mt-[7px] flex h-[40px] pl-[3px]">
        <span className="mt-[3px]"><FileIcon /></span>
        <p className="ml-[6px] w-[300px] text-[11.4px] leading-[20px]">c:\users\asus\desktop\fantacal...i\all-euro-data-2019-<br />2020.xlsx</p>
      </div>
      <h3 className="mt-[22px] h-[24px] text-[16.3px] leading-[24px]">Livello di privacy</h3>
      <div className="relative mt-[1px] w-[232px]">
        <div className="flex h-[25px] items-center justify-between border border-[#a6a6a6] pl-[5px] pr-[10px] text-[11.2px]">
          Pubblico
          <Caret />
        </div>
        <div className="absolute left-0 top-[26px] z-10 w-full border border-[#a6a6a6] bg-white text-[11.2px]">
          <div className="flex h-[20px] items-center pl-[5px]">Nessuno</div>
          <div className="flex h-[20px] items-center bg-[#9fd5b7] pl-[5px]">Pubblico</div>
          <div className="flex h-[20px] items-center pl-[5px]">Aziendale</div>
          <div className="flex h-[20px] items-center pl-[5px]">Privato</div>
        </div>
      </div>
      <div className="absolute left-[257px] top-[190px] flex">
        <Btn className="w-[37px] justify-end border border-[#217346] pr-[28px]">O</Btn>
        <Btn className="ml-[14px] w-[60px] border border-[#c6c6c6]">Annulla</Btn>
      </div>
    </div>
  )
}

export default function App() {
  return (
    <div className="relative flex h-[768px] w-[1366px] flex-col overflow-hidden">
      <div className="relative bg-[#217346]">
        <TitleBackdrop />
        <TitleBar />
        <RibbonTabs />
      </div>
      <FormulaBar />
      <Sheet />
      <SheetTabs />
      <StatusBar />
      <Taskbar />
      <DataSourceDialog />
      <PermissionDialog />
      {/* riquadri rossi sopra lo screenshot */}
      <div className="absolute left-[415px] top-[559px] h-[30px] w-[147px] border-[6px] border-[#ff0000]" />
      <div className="absolute left-[620px] top-[401px] h-[120px] w-[256px] border-[6px] border-[#ff0000]" />
    </div>
  )
}
